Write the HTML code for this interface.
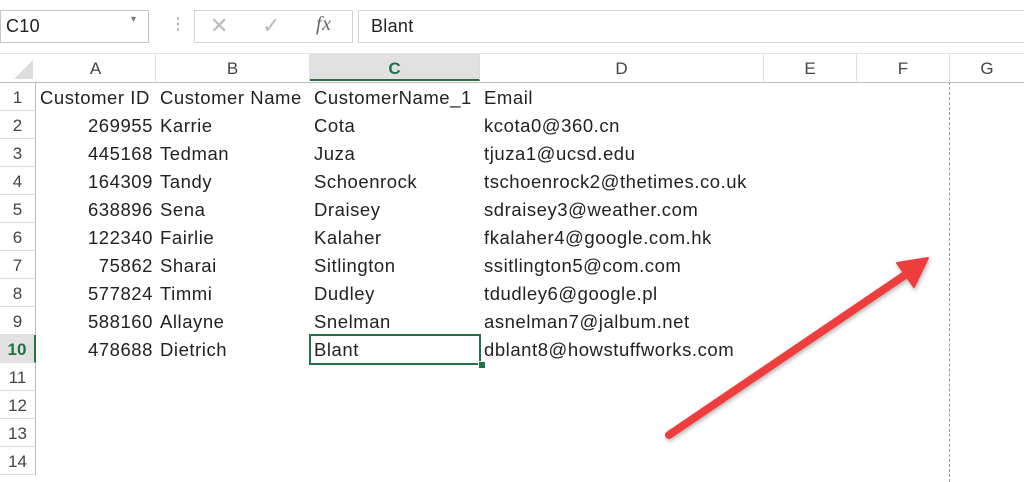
<!DOCTYPE html>
<html><head><style>
body{margin:0;width:1024px;height:471px;overflow:hidden;background:#fff;font-family:"Liberation Sans",sans-serif;position:relative}
.a{position:absolute}
.t{position:absolute;font-size:18.5px;letter-spacing:0.55px;color:#222;white-space:nowrap}
.ch{position:absolute;top:54px;height:27px;line-height:29px;text-align:center;font-size:17px;color:#444;border-right:1px solid #ddd;box-sizing:border-box}
.rh{position:absolute;left:0;width:36px;height:28px;line-height:30px;text-align:center;font-size:17px;color:#444;border-bottom:1px solid #ddd;border-right:1px solid #bbb;box-sizing:border-box}
</style></head><body>
<div class="a" style="left:0;top:10px;width:149px;height:33px;border:1px solid #c6c6c6;box-sizing:border-box"></div>
<div class="t" style="left:6px;top:16px;font-size:18px;letter-spacing:0.3px">C10</div>
<div class="t" style="left:131px;top:14px;font-size:10px;color:#777">▾</div>
<div class="t" style="left:170px;top:14px;font-size:16px;color:#999">⋮</div>
<div class="a" style="left:194px;top:10px;width:159px;height:33px;border:1px solid #d4d4d4;box-sizing:border-box"></div>
<div class="t" style="left:210px;top:13px;font-size:22px;color:#bbb">✕</div>
<div class="t" style="left:262px;top:13px;font-size:22px;color:#bbb">✓</div>
<div class="t" style="left:316px;top:13px;font-size:20px;color:#666;font-family:'Liberation Serif',serif;font-style:italic">fx</div>
<div class="a" style="left:358px;top:10px;width:670px;height:33px;border:1px solid #d4d4d4;box-sizing:border-box"></div>
<div class="t" style="left:371px;top:16px;font-size:18px;letter-spacing:0.3px">Blant</div>
<div class="a" style="left:0;top:53px;width:1024px;height:28px;border-top:1px solid #e4e4e4;border-bottom:1px solid #bbb"></div>
<svg class="a" style="left:12px;top:58px" width="22" height="22"><polygon points="21,2 21,21 2,21" fill="#ddd"/></svg>
<div class="ch" style="left:36px;width:120px">A</div>
<div class="ch" style="left:156px;width:154px">B</div>
<div class="ch" style="left:310px;width:170px;background:#e1e1e1;color:#217346;font-weight:bold;border-bottom:2px solid #217346">C</div>
<div class="ch" style="left:480px;width:284px">D</div>
<div class="ch" style="left:764px;width:93px">E</div>
<div class="ch" style="left:857px;width:93px">F</div>
<div class="ch" style="left:950px;width:74px;border:0">G</div>
<div class="a" style="left:949px;top:82px;height:400px;border-left:1px dashed #999"></div>
<div class="rh" style="top:83px">1</div><div class="rh" style="top:111px">2</div><div class="rh" style="top:139px">3</div><div class="rh" style="top:167px">4</div><div class="rh" style="top:195px">5</div><div class="rh" style="top:223px">6</div><div class="rh" style="top:251px">7</div><div class="rh" style="top:279px">8</div><div class="rh" style="top:307px">9</div>
<div class="rh" style="top:335px;background:#e1e1e1;color:#217346;font-weight:bold;border-right:2px solid #217346">10</div>
<div class="rh" style="top:363px">11</div><div class="rh" style="top:391px">12</div><div class="rh" style="top:419px">13</div><div class="rh" style="top:447px">14</div>
<div class="a" style="left:309px;top:334px;width:172px;height:31px;border:2px solid #217346;box-sizing:border-box"></div>
<div class="a" style="left:478px;top:361px;width:6px;height:6px;background:#217346;border:1px solid #fff"></div>
<div class="t" style="left:40px;top:87px">Customer ID</div><div class="t" style="left:160px;top:87px">Customer Name</div><div class="t" style="left:314px;top:87px">CustomerName_1</div><div class="t" style="left:484px;top:87px">Email</div>
<div class="t" style="right:871px;top:115px">269955</div><div class="t" style="left:160px;top:115px">Karrie</div><div class="t" style="left:314px;top:115px">Cota</div><div class="t" style="left:484px;top:115px">kcota0@360.cn</div>
<div class="t" style="right:871px;top:143px">445168</div><div class="t" style="left:160px;top:143px">Tedman</div><div class="t" style="left:314px;top:143px">Juza</div><div class="t" style="left:484px;top:143px">tjuza1@ucsd.edu</div>
<div class="t" style="right:871px;top:171px">164309</div><div class="t" style="left:160px;top:171px">Tandy</div><div class="t" style="left:314px;top:171px">Schoenrock</div><div class="t" style="left:484px;top:171px">tschoenrock2@thetimes.co.uk</div>
<div class="t" style="right:871px;top:199px">638896</div><div class="t" style="left:160px;top:199px">Sena</div><div class="t" style="left:314px;top:199px">Draisey</div><div class="t" style="left:484px;top:199px">sdraisey3@weather.com</div>
<div class="t" style="right:871px;top:227px">122340</div><div class="t" style="left:160px;top:227px">Fairlie</div><div class="t" style="left:314px;top:227px">Kalaher</div><div class="t" style="left:484px;top:227px">fkalaher4@google.com.hk</div>
<div class="t" style="right:871px;top:255px">75862</div><div class="t" style="left:160px;top:255px">Sharai</div><div class="t" style="left:314px;top:255px">Sitlington</div><div class="t" style="left:484px;top:255px">ssitlington5@com.com</div>
<div class="t" style="right:871px;top:283px">577824</div><div class="t" style="left:160px;top:283px">Timmi</div><div class="t" style="left:314px;top:283px">Dudley</div><div class="t" style="left:484px;top:283px">tdudley6@google.pl</div>
<div class="t" style="right:871px;top:311px">588160</div><div class="t" style="left:160px;top:311px">Allayne</div><div class="t" style="left:314px;top:311px">Snelman</div><div class="t" style="left:484px;top:311px">asnelman7@jalbum.net</div>
<div class="t" style="right:871px;top:339px">478688</div><div class="t" style="left:160px;top:339px">Dietrich</div><div class="t" style="left:314px;top:339px">Blant</div><div class="t" style="left:484px;top:339px">dblant8@howstuffworks.com</div>
<svg class="a" style="left:0;top:0" width="1024" height="471">
<defs><filter id="s"><feDropShadow dx="1" dy="2" stdDeviation="2" flood-color="#000" flood-opacity="0.3"/></filter></defs>
<g filter="url(#s)" fill="#ee3e3e" stroke="#ee3e3e">
<line x1="669" y1="435" x2="905" y2="275" stroke-width="8" stroke-linecap="round"/>
<polygon points="928,258 897,263 914,287" stroke-width="2" stroke-linejoin="round"/>
</g></svg>
</body></html>
